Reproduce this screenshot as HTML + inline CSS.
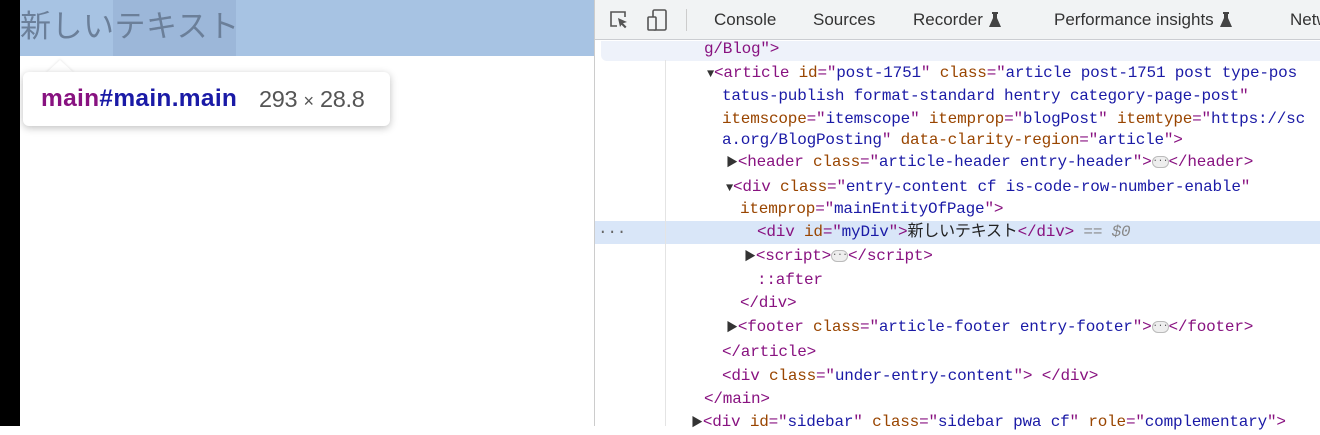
<!DOCTYPE html>
<html><head><meta charset="utf-8"><style>
*{margin:0;padding:0;box-sizing:border-box}
body{width:1320px;height:426px;overflow:hidden;background:#fff;position:relative;font-family:"Liberation Sans",sans-serif}
.blk{position:absolute;left:0;top:0;width:20px;height:426px;background:#000}
.hl{position:absolute;left:20px;top:0;width:574px;height:56px;background:#a7c3e3}
.hl2{position:absolute;left:113px;top:0;width:123px;height:56px;background:#9cb7d9}
.jt{position:absolute;left:20px;top:7px;font:31px/40px "Liberation Sans","Noto Sans CJK JP",sans-serif;color:#6b7f99;letter-spacing:0.5px}
.tip{position:absolute;left:23px;top:72px;width:367px;height:54px;background:#fff;border-radius:6px;box-shadow:0 2px 8px rgba(0,0,0,.25)}
.arr{position:absolute;left:46px;top:60px;width:0;height:0;border-left:14px solid transparent;border-right:14px solid transparent;border-bottom:13px solid #fff;filter:drop-shadow(0 -1px 1px rgba(0,0,0,.08))}
.tip .t{position:absolute;left:18px;top:14px;font:bold 24.5px/26px "Liberation Sans",sans-serif;letter-spacing:0.3px}
.tip .d{position:absolute;left:236px;top:14px;font:23.5px/26px "Liberation Sans",sans-serif;color:#555;letter-spacing:-0.3px}
.dt{position:absolute;left:594px;top:0;width:726px;height:426px;border-left:1px solid #ccc;background:#fff}
.tb{position:absolute;left:0;top:0;width:726px;height:40px;background:#f1f3f4;border-bottom:1px solid #cbcdd1}
.tb span{position:absolute;top:10px;font:17px/20px "Liberation Sans",sans-serif;color:#333}
.ln{position:absolute;white-space:pre;font:16px/23px "Liberation Mono","Noto Sans CJK JP",monospace;color:#222;letter-spacing:-0.2px}
.g{color:#881280}.a{color:#994500}.v{color:#1a1aa6}
.tri{font-size:12px;color:#333}
.el{display:inline-block;width:17px;height:12px;border:1px solid #bbb;border-radius:6px;background:#eee;vertical-align:middle;font-size:9px;line-height:8px;text-align:center;color:#555}
</style></head><body>
<div class="blk"></div>
<div class="hl"></div><div class="hl2"></div>
<div class="jt">新しいテキスト</div>
<div class="arr"></div>
<div class="tip"><div class="t"><span style="color:#881280">main</span><span style="color:#1a1aa6">#main.main</span></div><div class="d">293 <span style="font-size:18px">×</span> 28.8</div></div>
<div class="dt">
<div class="tb">
<svg style="position:absolute;left:14px;top:10px" width="22" height="20" viewBox="0 0 22 20"><path d="M8 16H2V2h14v5" fill="none" stroke="#555" stroke-width="1.6"/><path d="M9 8l9 4-4 1.3 3.5 3.5-1.5 1.5-3.5-3.5L11 17z" fill="#555"/></svg>
<svg style="position:absolute;left:52px;top:8px" width="22" height="24" viewBox="0 0 22 24"><rect x="6" y="2" width="13" height="20" rx="1.5" fill="none" stroke="#555" stroke-width="1.6"/><rect x="1" y="9" width="8" height="13" rx="1" fill="#f1f3f4" stroke="#555" stroke-width="1.6"/></svg>
<div style="position:absolute;left:91px;top:9px;width:1px;height:22px;background:#ccc"></div>
<span style="left:119px">Console</span>
<span style="left:218px">Sources</span>
<span style="left:318px">Recorder</span>
<svg style="position:absolute;left:394px;top:12px" width="12" height="15" viewBox="0 0 12 15"><path d="M3 0h6v2H8v4l4 9H0l4-9V2H3z" fill="#444"/></svg>
<span style="left:459px">Performance insights</span>
<svg style="position:absolute;left:625px;top:12px" width="12" height="15" viewBox="0 0 12 15"><path d="M3 0h6v2H8v4l4 9H0l4-9V2H3z" fill="#444"/></svg>
<span style="left:695px">Netw</span>
</div>
<div style="position:absolute;left:6px;top:41px;width:720px;height:20px;background:#eef2fa;border-radius:0 0 0 6px"></div>
<div style="position:absolute;left:0;top:221px;width:726px;height:23px;background:#d9e6f8"></div>
<div style="position:absolute;left:70px;top:60px;width:1px;height:366px;background:#e4e4e4"></div>
<div class="ln" style="left:3px;top:221px;color:#666">···</div>
<div class="ln" style="left:109px;top:38px"><span class="g">g/Blog"&gt;</span></div>
<div class="ln" style="left:112px;top:62px"><span class="tri">▼</span><span class="g">&lt;article</span> <span class="a">id</span><span class="g">="</span><span class="v">post-1751</span><span class="g">"</span> <span class="a">class</span><span class="g">="</span><span class="v">article post-1751 post type-pos</span></div>
<div class="ln" style="left:127px;top:85px"><span class="v">tatus-publish format-standard hentry category-page-post</span><span class="g">"</span></div>
<div class="ln" style="left:127px;top:108px"><span class="a">itemscope</span><span class="g">="</span><span class="v">itemscope</span><span class="g">"</span> <span class="a">itemprop</span><span class="g">="</span><span class="v">blogPost</span><span class="g">"</span> <span class="a">itemtype</span><span class="g">="</span><span class="v">https://sc</span></div>
<div class="ln" style="left:127px;top:129px"><span class="v">a.org/BlogPosting</span><span class="g">"</span> <span class="a">data-clarity-region</span><span class="g">="</span><span class="v">article</span><span class="g">"&gt;</span></div>
<div class="ln" style="left:131px;top:151px"><span class="tri">▶</span><span class="g">&lt;header</span> <span class="a">class</span><span class="g">="</span><span class="v">article-header entry-header</span><span class="g">"&gt;</span><span class="el">···</span><span class="g">&lt;/header&gt;</span></div>
<div class="ln" style="left:131px;top:176px"><span class="tri">▼</span><span class="g">&lt;div</span> <span class="a">class</span><span class="g">="</span><span class="v">entry-content cf is-code-row-number-enable</span><span class="g">"</span></div>
<div class="ln" style="left:145px;top:198px"><span class="a">itemprop</span><span class="g">="</span><span class="v">mainEntityOfPage</span><span class="g">"&gt;</span></div>
<div class="ln" style="left:162px;top:221px"><span class="g">&lt;div</span> <span class="a">id</span><span class="g">="</span><span class="v">myDiv</span><span class="g">"&gt;</span>新しいテキスト<span class="g">&lt;/div&gt;</span> <span style="color:#888">== <i>$0</i></span></div>
<div class="ln" style="left:149px;top:245px"><span class="tri">▶</span><span class="g">&lt;script&gt;</span><span class="el">···</span><span class="g">&lt;/script&gt;</span></div>
<div class="ln" style="left:162px;top:269px"><span class="g">::after</span></div>
<div class="ln" style="left:145px;top:292px"><span class="g">&lt;/div&gt;</span></div>
<div class="ln" style="left:131px;top:316px"><span class="tri">▶</span><span class="g">&lt;footer</span> <span class="a">class</span><span class="g">="</span><span class="v">article-footer entry-footer</span><span class="g">"&gt;</span><span class="el">···</span><span class="g">&lt;/footer&gt;</span></div>
<div class="ln" style="left:127px;top:341px"><span class="g">&lt;/article&gt;</span></div>
<div class="ln" style="left:127px;top:365px"><span class="g">&lt;div</span> <span class="a">class</span><span class="g">="</span><span class="v">under-entry-content</span><span class="g">"&gt;</span> <span class="g">&lt;/div&gt;</span></div>
<div class="ln" style="left:109px;top:388px"><span class="g">&lt;/main&gt;</span></div>
<div class="ln" style="left:96px;top:411px"><span class="tri">▶</span><span class="g">&lt;div</span> <span class="a">id</span><span class="g">="</span><span class="v">sidebar</span><span class="g">"</span> <span class="a">class</span><span class="g">="</span><span class="v">sidebar pwa cf</span><span class="g">"</span> <span class="a">role</span><span class="g">="</span><span class="v">complementary</span><span class="g">"&gt;</span></div>
</div>
</body></html>
